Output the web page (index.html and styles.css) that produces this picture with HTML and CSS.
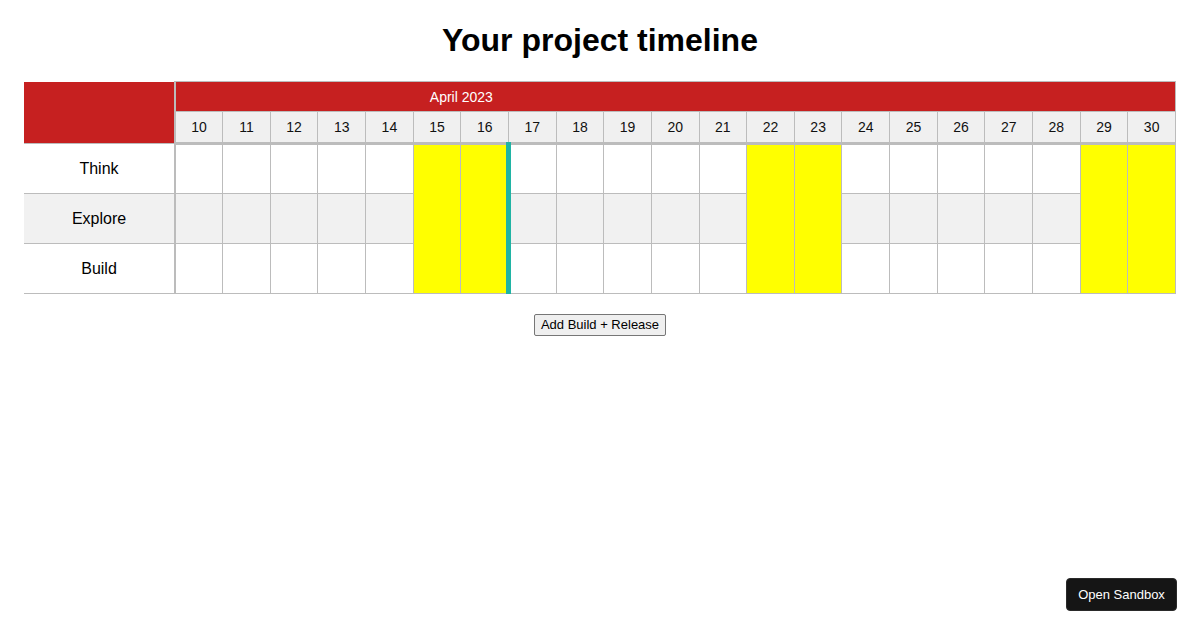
FILE: index.html
```html
<!DOCTYPE html>
<html>
<head>
<meta charset="utf-8">
<link rel="stylesheet" href="styles.css">
</head>
<body>
<main class="page">
  <h1 class="title">Your project timeline</h1>
  <table class="timeline">
    <colgroup>
      <col class="col-label">
      <col span="21">
    </colgroup>
    <thead>
      <tr class="month-row">
        <th class="corner" rowspan="2"></th>
        <th class="month" colspan="12">April 2023</th>
        <th class="month" colspan="9"></th>
      </tr>
      <tr class="day-row">
        <th>10</th><th>11</th><th>12</th><th>13</th><th>14</th><th>15</th><th>16</th>
        <th>17</th><th>18</th><th>19</th><th>20</th><th>21</th><th>22</th><th>23</th>
        <th>24</th><th>25</th><th>26</th><th>27</th><th>28</th><th>29</th><th>30</th>
      </tr>
    </thead>
    <tbody>
      <tr class="row">
        <th class="label">Think</th>
        <td></td><td></td><td></td><td></td><td></td>
        <td class="weekend" rowspan="3"></td><td class="weekend" rowspan="3"></td>
        <td class="today"></td><td></td><td></td><td></td><td></td>
        <td class="weekend" rowspan="3"></td><td class="weekend" rowspan="3"></td>
        <td></td><td></td><td></td><td></td><td></td>
        <td class="weekend" rowspan="3"></td><td class="weekend" rowspan="3"></td>
      </tr>
      <tr class="row alt">
        <th class="label">Explore</th>
        <td></td><td></td><td></td><td></td><td></td>
        <td class="today"></td><td></td><td></td><td></td><td></td>
        <td></td><td></td><td></td><td></td><td></td>
      </tr>
      <tr class="row">
        <th class="label">Build</th>
        <td></td><td></td><td></td><td></td><td></td>
        <td class="today"></td><td></td><td></td><td></td><td></td>
        <td></td><td></td><td></td><td></td><td></td>
      </tr>
    </tbody>
  </table>
  <div class="actions">
    <button class="add-btn" type="button">Add Build + Release</button>
  </div>
</main>
<button class="sandbox-btn" type="button">Open Sandbox</button>
</body>
</html>
```

FILE: styles.css
```css
html, body {
  margin: 0;
  padding: 0;
  background: #ffffff;
  font-family: "Liberation Sans", Arial, sans-serif;
  color: #000;
}

.page {
  padding: 0 24px;
}

.title {
  margin: 0;
  padding-top: 22px;
  height: 81px;
  box-sizing: border-box;
  text-align: center;
  font-size: 32px;
  font-weight: bold;
  line-height: 37px;
}

.timeline {
  width: 1152px;
  table-layout: fixed;
  border-collapse: collapse;
  border-spacing: 0;
}

.col-label {
  width: 151px;
}

.timeline th,
.timeline td {
  padding: 0;
  border: 1px solid #bcbcbc;
}

.corner {
  background: #c62020;
  border: none !important;
  border-right: 2px solid #bcbcbc !important;
}

.month-row {
  height: 30px;
}

.month {
  background: #c62020;
  color: #ffffff;
  font-weight: normal;
  font-size: 14px;
  text-align: center;
  border-left: none !important;
  border-right: none !important;
}

.month-row .month:last-child {
  border-right: 1px solid #bcbcbc !important;
}

.day-row {
  height: 32px;
}

.day-row th {
  background: #f0f0f0;
  font-weight: normal;
  font-size: 14px;
  color: #111;
  border-bottom: 3px solid #bcbcbc;
}

.row {
  height: 50px;
}

.row.alt td,
.row.alt .label {
  background: #f1f1f1;
}

.label {
  font-weight: normal;
  font-size: 16px;
  text-align: center;
  border-left: none !important;
  border-right: 2px solid #bcbcbc !important;
}

.timeline .weekend {
  background: #ffff00;
}

.timeline .today {
  border-left: 5px solid #20b4a4;
}

.actions {
  display: flex;
  justify-content: center;
  padding-top: 20px;
}

.add-btn {
  font-family: "Liberation Sans", Arial, sans-serif;
  font-size: 13px;
  color: #000;
  background: #efefef;
  border: 1px solid #767676;
  border-radius: 2px;
  padding: 2px 6px 3px;
  height: 22px;
  line-height: 15px;
}

.sandbox-btn {
  position: fixed;
  right: 23px;
  bottom: 19px;
  width: 111px;
  height: 33px;
  background: #151515;
  color: #ffffff;
  border: 1px solid #2a2a2a;
  border-radius: 4px;
  font-family: "Liberation Sans", Arial, sans-serif;
  font-size: 13px;
  padding: 0;
}
```
